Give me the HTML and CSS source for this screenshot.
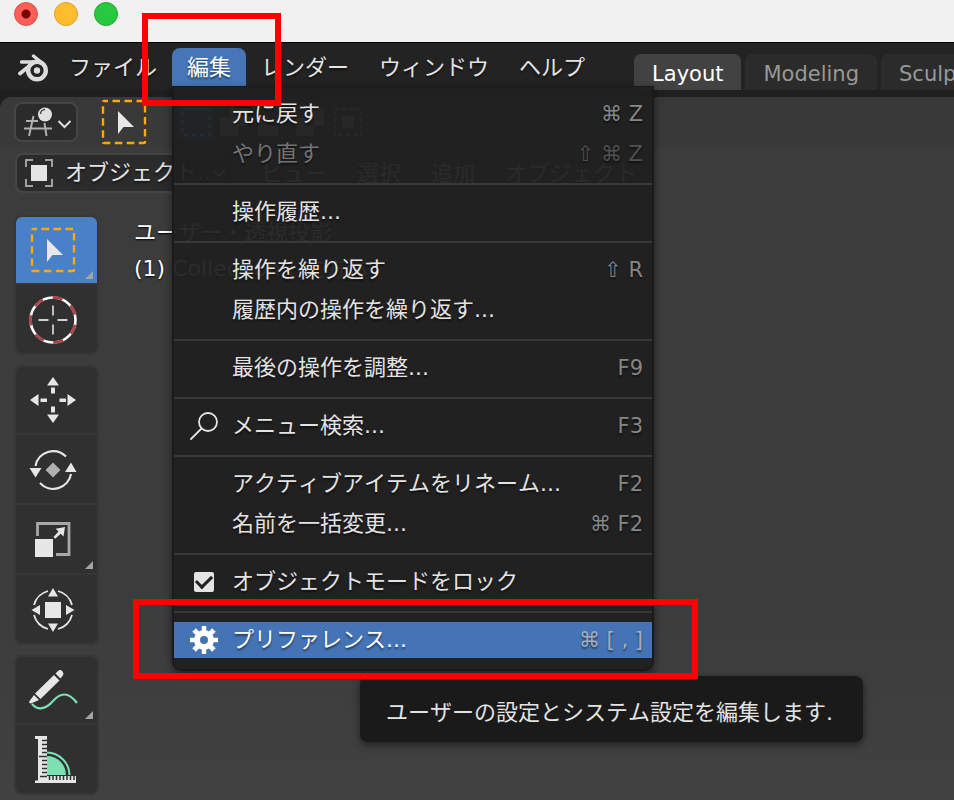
FILE: index.html
```html
<!DOCTYPE html>
<html lang="ja">
<head>
<meta charset="utf-8">
<title>Blender</title>
<link rel="stylesheet" href="styles.css">
</head>
<body>
<header class="titlebar">
  <button class="light light-close" aria-label="閉じる"></button>
  <button class="light light-min" aria-label="最小化"></button>
  <button class="light light-max" aria-label="最大化"></button>
</header>

<nav class="topbar">
  <button class="logo" aria-label="Blender">
    <svg viewBox="0 0 31 28" width="31" height="28" fill="none" stroke="currentColor" stroke-linecap="round" stroke-linejoin="round"><circle cx="19" cy="16.500" r="8.800" stroke-width="4.400"/><circle cx="19" cy="16.500" r="3.200" fill="currentColor" stroke="none"/><path d="M15.500 2L26 10.500M3.500 8H20" stroke-width="3.400"/><path d="M2 19.500L14.500 9.500" stroke-width="3.800"/></svg>
  </button>
  <button class="menu-button">ファイル</button>
  <div class="menu-anchor">
    <button class="menu-button is-open" aria-haspopup="menu" aria-expanded="true">編集</button>
    <div class="menu">
      <ul class="group">
        <li><button class="item"><span class="icon"></span><span>元に戻す</span><kbd>⌘ Z</kbd></button></li>
        <li><button class="item" disabled><span class="icon"></span><span>やり直す</span><kbd>⇧ ⌘ Z</kbd></button></li>
      </ul>
      <ul class="group">
        <li><button class="item"><span class="icon"></span><span>操作履歴...</span></button></li>
      </ul>
      <ul class="group">
        <li><button class="item"><span class="icon"></span><span>操作を繰り返す</span><kbd>⇧ R</kbd></button></li>
        <li><button class="item"><span class="icon"></span><span>履歴内の操作を繰り返す...</span></button></li>
      </ul>
      <ul class="group">
        <li><button class="item"><span class="icon"></span><span>最後の操作を調整...</span><kbd>F9</kbd></button></li>
      </ul>
      <ul class="group">
        <li><button class="item"><span class="icon"><svg viewBox="0 0 28 28" width="28" height="28" fill="none" stroke="currentColor" stroke-width="1.8" stroke-linecap="round"><circle cx="18" cy="10" r="9"/><path d="M11.500 16.500L1 27"/></svg></span><span>メニュー検索...</span><kbd>F3</kbd></button></li>
      </ul>
      <ul class="group">
        <li><button class="item"><span class="icon"></span><span>アクティブアイテムをリネーム...</span><kbd>F2</kbd></button></li>
        <li><button class="item"><span class="icon"></span><span>名前を一括変更...</span><kbd>⌘ F2</kbd></button></li>
      </ul>
      <ul class="group">
        <li><label class="item"><span class="icon"><input class="check" type="checkbox" checked></span><span>オブジェクトモードをロック</span></label></li>
      </ul>
      <ul class="group">
        <li class="callout-anchor">
          <button class="item is-active" aria-describedby="prefs-tip"><span class="icon"><svg viewBox="-14 -14 28 28" width="28" height="28"><g fill="currentColor"><rect x="-2.200" y="-14" width="4.400" height="28"/><rect x="-14" y="-2.200" width="28" height="4.400"/><rect x="-2.500" y="-14" width="5" height="28" transform="rotate(45)"/><rect x="-2.500" y="-14" width="5" height="28" transform="rotate(-45)"/><circle r="10"/></g><circle class="gear-hole" r="4"/></svg></span><span>プリファレンス...</span><kbd>⌘ [ , ]</kbd></button>
          <div class="tooltip" id="prefs-tip" role="tooltip">ユーザーの設定とシステム設定を編集します.</div>
          <div class="callout callout-item"></div>
        </li>
      </ul>
    </div>
    <div class="callout callout-menu"></div>
  </div>
  <button class="menu-button">レンダー</button>
  <button class="menu-button">ウィンドウ</button>
  <button class="menu-button">ヘルプ</button>
  <div class="tabs">
    <button class="tab is-current">Layout</button>
    <button class="tab">Modeling</button>
    <button class="tab">Sculpting</button>
  </div>
</nav>

<main class="editor">
  <div class="tool-header">
    <button class="editor-type" aria-label="エディタータイプ">
      <svg viewBox="0 0 56 32" width="56" height="32" fill="none"><path d="M6 15H18M4 22.500H32M13.500 10L9 30M24.500 17L26.500 30" stroke="#b0b0b0" stroke-width="2"/><circle cx="25" cy="8.500" r="7" fill="#e0e0e0"/><path d="M20.500 8a4.500 4.500 0 0 1 4.500-4.500" stroke="#444" stroke-width="1.500"/><path d="M38.500 15l6 6 6-6" stroke="#ddd" stroke-width="2"/></svg>
    </button>
    <button class="plain" aria-label="ボックス選択">
      <svg viewBox="0 0 46 46" width="46" height="46"><rect x="2" y="2" width="42" height="42" rx="1" fill="none" stroke="#ffa800" stroke-width="2.400" stroke-dasharray="7.500 4.500" stroke-dashoffset="3.500"/><path d="M17 12v23l5.500-7H33z" fill="#e8e8e8"/></svg>
    </button>
    <div class="select-modes">
      <button class="mode is-on" aria-label="新規"><svg viewBox="0 0 28 28" width="28" height="28"><rect x="1" y="1" width="26" height="26" fill="none" stroke="#b9cbe0" stroke-width="2" stroke-dasharray="5 3"/></svg></button>
      <button class="mode" aria-label="拡張"><svg viewBox="0 0 28 28" width="28" height="28"><path d="M10 0h18v18H18v10H0V10h10z" fill="#aaa"/></svg></button>
      <button class="mode" aria-label="減算"><svg viewBox="0 0 28 28" width="28" height="28"><path d="M0 9h10v9h10v10H0z" fill="#aaa"/><path d="M10 1h17v17h-7" fill="none" stroke="#aaa" stroke-width="2" stroke-dasharray="4 3"/></svg></button>
      <button class="mode" aria-label="反転"><svg viewBox="0 0 28 28" width="28" height="28"><path d="M10 0h18v18H18v10H0V10h10zm0 10v8h8v-8z" fill="#aaa" fill-rule="evenodd"/></svg></button>
      <button class="mode" aria-label="交差"><svg viewBox="0 0 28 28" width="28" height="28"><rect x="1" y="1" width="26" height="26" fill="none" stroke="#aaa" stroke-width="2" stroke-dasharray="4 3"/><rect x="8" y="8" width="12" height="12" fill="#aaa"/></svg></button>
    </div>
  </div>

  <div class="view-header">
    <div class="mode-picker">
      <svg class="mode-icon" viewBox="0 0 28 28" width="28" height="28"><path d="M1 8V1h7M20 1h7v7M27 20v7h-7M8 27H1v-7" fill="none" stroke="#a0a0a0" stroke-width="2"/><rect x="6" y="6" width="16" height="16" fill="#e4e4e4"/></svg>
      <select aria-label="モード"><option>オブジェクト...</option></select>
      <svg class="mode-arrow" viewBox="0 0 14 8" width="14" height="8"><path d="M1 1l6 6 6-6" fill="none" stroke="#ddd" stroke-width="2"/></svg>
    </div>
    <button class="menu-button">ビュー</button>
    <button class="menu-button">選択</button>
    <button class="menu-button">追加</button>
    <button class="menu-button">オブジェクト</button>
  </div>

  <div class="viewport">
    <div class="toolbar">
      <ul class="tools">
        <li><button class="tool is-on has-more" aria-label="ボックス選択"><svg viewBox="0 0 46 46" width="46" height="46"><rect x="2" y="2" width="42" height="42" rx="1" fill="none" stroke="#ffa800" stroke-width="2.400" stroke-dasharray="7.500 4.500" stroke-dashoffset="3.500"/><path d="M17 12v23l5.500-7H33z" fill="#e8e8e8"/></svg></button></li>
        <li><button class="tool" aria-label="カーソル"><svg viewBox="0 0 48 48" width="48" height="48" fill="none"><circle cx="24" cy="24" r="22.500" stroke="#fff" stroke-width="2.600"/><circle cx="24" cy="24" r="22.500" stroke="#ad4248" stroke-width="2.800" pathLength="140" stroke-dasharray="10 10" transform="rotate(12 24 24)"/><path d="M24 9.500V19.500M24 28.500V38.500M9.500 24H19.500M28.500 24H38.500" stroke="#cfcfcf" stroke-width="1.800"/></svg></button></li>
      </ul>
      <ul class="tools">
        <li><button class="tool" aria-label="移動"><svg viewBox="0 0 48 48" width="48" height="48" fill="#e6e6e6"><path d="M24 1l6 8.500H18zM24 47l6-8.500H18zM1 24l8.500-6v12zM47 24l-8.500-6v12zM22 11.500h4v6h-4zM22 30.500h4v6h-4zM11.500 22.500h6.500v3.500h-6.500zM30.500 22.500H37v3.500h-6.500z"/></svg></button></li>
        <li><button class="tool" aria-label="回転"><svg viewBox="0 0 48 48" width="48" height="48"><path d="M6.500 20A18 18 0 0 1 37 10.500M42 28A18 18 0 0 1 11 37" fill="none" stroke="#e6e6e6" stroke-width="2.200"/><path d="M.500 22h12l-6 9.500zM36 26h11.500L42 16.500z" fill="#e6e6e6"/><path d="M24 16.500l7.500 7.500-7.500 7.500-7.500-7.500z" fill="#b0b0b0"/></svg></button></li>
        <li><button class="tool has-more" aria-label="スケール"><svg viewBox="0 0 48 48" width="48" height="48"><path d="M8.500 20V7.500H40V38.500H27" fill="none" stroke="#a8a8a8" stroke-width="2.800"/><path d="M6 23h18v18H6zM36 11l-1.500 9.500-2.800-2.800-5.500 5-1.700-1.700 5-5.500-2.800-2.800z" fill="#e6e6e6"/></svg></button></li>
        <li><button class="tool" aria-label="トランスフォーム"><svg viewBox="0 0 48 48" width="48" height="48"><path d="M29 5A20 20 0 0 1 43 19M43 29A20 20 0 0 1 29 43M19 43A20 20 0 0 1 5 29M5 19A20 20 0 0 1 19 5" fill="none" stroke="#e6e6e6" stroke-width="1.800"/><path d="M16 16h16v16H16zM24 2l5 8.500H19zM24 46l5-8.500H19zM2.500 24l8.500-5v10zM45.500 24L37 19v10z" fill="#e6e6e6"/></svg></button></li>
      </ul>
      <ul class="tools">
        <li><button class="tool has-more" aria-label="アノテート"><svg viewBox="0 0 50 48" width="50" height="48"><path d="M4 38C10 45 18 43 25 35S40 25 49 37" fill="none" stroke="#7de0b2" stroke-width="2.200"/><path d="M27.500 7.500L30 5Q32.500 3 34.500 5.500T34 10.500L32.500 12.500zM26 9L31.500 14.500 12.500 33 7 27.500zM6 29L11 34 3 37.500Q.500 37.500 1.500 35z" fill="#e6e6e6"/></svg></button></li>
        <li><button class="tool" aria-label="メジャー"><svg viewBox="0 0 48 48" width="48" height="48"><path d="M18 20A19 19 0 0 1 37 39H18z" fill="#7de0b2"/><path d="M18 16.500A23 23 0 0 1 40.500 39" fill="none" stroke="#7de0b2" stroke-width="2"/><path d="M6 0h12v40h29v7H6v-2.500h3V3H6z" fill="#e6e6e6"/><path d="M13 4.500h5M13 8.500h5M13 12.500h5M13 16.500h5M10 20.500h8M13 24.500h5M13 28.500h5M13 32.500h5M13 36.500h5M11 40.500h7M20.500 39v5M24 39v5M27.500 39v5M31 39v5M34.500 39v5M38 39v5M41.500 39v5M45 39v5" stroke="#303030" stroke-width="1.500"/></svg></button></li>
      </ul>
    </div>
    <div class="view-info">
      <p>ユーザー・透視投影</p>
      <p>(1) Collection | 立方体</p>
    </div>
  </div>
</main>
</body>
</html>
```
FILE: styles.css
```css
* { box-sizing: border-box; }

body {
  margin: 0;
  height: 100vh;
  display: flex;
  flex-direction: column;
  overflow: hidden;
  background: #1f1f1f;
  color: #e3e3e3;
  font: 22px/36px "DejaVu Sans", "Noto Sans CJK JP", sans-serif;
  font-kerning: none;
}

button, select, kbd { font: inherit; font-kerning: none; color: inherit; }
button { border: 0; padding: 0; background: none; white-space: nowrap; }
ul { list-style: none; margin: 0; padding: 0; }
p { margin: 0; }
svg { display: block; }

/* Window title bar */
.titlebar {
  flex: none;
  display: flex;
  gap: 16px;
  height: 43px;
  padding: 2px 14px;
  background: #f1f1f1;
  border-bottom: 1px solid #000;
}
.light { width: 24px; height: 24px; border-radius: 50%; border: 1px solid; }
.light-close { background: radial-gradient(circle, #730500 4px, #ff5f57 5px); border-color: #e14942; }
.light-min { background: #febc2e; border-color: #dfa023; }
.light-max { background: #28c840; border-color: #1eab2f; }

/* Main menu and workspace tabs */
.topbar {
  flex: none;
  display: flex;
  align-items: flex-start;
  height: 47px;
  padding-top: 5px;
  background: #232323;
}
.logo { width: 54px; height: 38px; padding: 2px 0 0 18px; color: #dcdcdc; }
.menu-button {
  flex: none;
  height: 38px;
  padding: 2px 15px 0;
  text-shadow: 0 2px 2px rgba(0, 0, 0, .5);
}
.menu-button.is-open { display: block; background: #4776b7; color: #fff; border-radius: 8px 8px 0 0; }
.menu-anchor { position: relative; z-index: 2; }
.tabs { flex: 1; min-width: 0; display: flex; gap: 4px; padding: 6px 0 0 34px; overflow: hidden; }
.tab {
  height: 36px;
  padding: 2px 18px 0;
  border-radius: 7px 7px 0 0;
  background: #2b2b2b;
  color: #989898;
  font-size: 21px;
}
.tab.is-current { background: #424242; color: #fff; }

/* Edit menu */
.menu {
  position: absolute;
  top: 100%;
  left: 0;
  width: 482px;
  border: 2px solid #1a1a1a;
  border-top-width: 1px;
  border-radius: 0 0 9px 9px;
  background: rgba(32, 32, 32, .95);
  box-shadow: 0 3px 9px rgba(0, 0, 0, .5);
}
.group { padding: 7px 0 9px; }
.group + .group { border-top: 2px solid #383838; }
.item {
  display: flex;
  align-items: center;
  width: 100%;
  height: 36px;
  margin: 2px 0;
  padding: 0 9px 0 16px;
  text-align: left;
  text-shadow: 0 2px 2px rgba(0, 0, 0, .5);
}
.item:disabled { color: #737373; }
.item.is-active { background: #4474b5; color: #fff; }
.group li { display: flex; }
.icon { width: 28px; margin-right: 14px; display: flex; justify-content: center; }
.item kbd { margin-left: auto; color: #858585; font-size: 21px; }
.item:disabled kbd { color: #505050; }
.item.is-active kbd { color: #a3adbd; }
.gear-hole { fill: #4474b5; }
.check {
  appearance: none;
  display: grid;
  place-items: center;
  width: 20px;
  height: 20px;
  margin: 0;
  border-radius: 2px;
  background: #e4e4e4;
}
.check:checked::after {
  content: "";
  width: 7px;
  height: 13px;
  margin-bottom: 4px;
  border: solid #222;
  border-width: 0 3px 3px 0;
  transform: rotate(45deg);
}

.callout-anchor { position: relative; }
.tooltip {
  position: absolute;
  top: 56px;
  left: 186px;
  width: max-content;
  padding: 19px 30px 11px 26px;
  border-radius: 8px;
  background: #1a1a1a;
  box-shadow: 0 3px 8px rgba(0, 0, 0, .5);
}
.callout { position: absolute; border: 6px solid #f00; pointer-events: none; }
.callout-menu { top: -35px; left: -30px; width: 139px; height: 93px; }
.callout-item { top: -21px; left: -41px; width: 565px; height: 80px; }

/* 3D view editor */
.editor {
  flex: 1;
  min-height: 0;
  margin-top: 7px;
  border-radius: 12px 0 0 0;
  overflow: hidden;
  background: linear-gradient(#3c3c3c 70%, #414141);
}
.tool-header { display: flex; align-items: center; height: 50px; padding-left: 14px; background: #393939; }
.editor-type {
  width: 64px;
  height: 40px;
  padding-left: 4px;
  border: 2px solid #454545;
  border-radius: 8px;
  background: #2b2b2b;
}
.plain { margin: 0 31px 0 23px; }
.select-modes { display: flex; gap: 2px; }
.mode { display: grid; place-items: center; width: 36px; height: 36px; background: #484848; }
.mode:last-child { border-radius: 0 6px 6px 0; }
.mode.is-on { background: #4474b5; border-radius: 6px 0 0 6px; }

.view-header { display: flex; align-items: center; height: 50px; padding: 2px 0 0 15px; }
.mode-picker {
  display: flex;
  align-items: center;
  width: 221px;
  height: 40px;
  margin-right: 10px;
  padding: 0 8px;
  border: 2px solid #454545;
  border-radius: 8px;
  background: #2b2b2b;
}
.mode-picker select { appearance: none; flex: 1; min-width: 0; height: 36px; padding: 0; margin-left: 12px; border: 0; background: none; text-shadow: 0 2px 2px rgba(0, 0, 0, .5); }
.mode-icon, .mode-arrow { flex: none; }

.viewport { display: flex; gap: 35px; padding: 18px 0 0 14px; }
.toolbar { display: grid; gap: 10px; align-content: start; }
.tools { width: 85px; border: 2px solid #373737; border-radius: 8px; background: #303030; overflow: hidden; }
.tools li + li { border-top: 2px solid #373737; padding-top: 2px; }
.tool {
  position: relative;
  display: grid;
  place-items: center;
  width: 100%;
  height: 66px;
  padding-right: 7px;
}
.tool.is-on { background: #4a80c8; }
.has-more::after {
  content: "";
  position: absolute;
  right: 4px;
  bottom: 4px;
  border: 4px solid #a3a3a3;
  border-top-color: transparent;
  border-left-color: transparent;
}
.view-info { color: #fff; text-shadow: 0 1px 2px #000; }
```
